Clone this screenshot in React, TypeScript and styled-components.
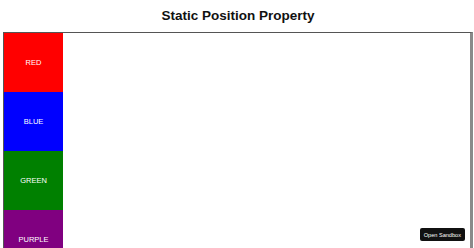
import styled, { createGlobalStyle } from 'styled-components';

const GlobalStyle = createGlobalStyle`
  body {
    margin: 0;
    background: #fff;
    font-family: "Liberation Sans", Arial, sans-serif;
    overflow: hidden;
  }
`;

const Page = styled.div`
  height: 100vh;
  padding: 0 1px 0 3px;
  display: flex;
  flex-direction: column;
`;

const Title = styled.h1`
  margin: 0;
  padding: 7px 0;
  height: 18px;
  line-height: 18px;
  font-size: 13.5px;
  font-weight: bold;
  text-align: center;
  color: #111;
`;

const Stage = styled.div`
  flex: 1;
  overflow: hidden;
  border-top: 1px solid #555;
  border-left: 1px solid #555;
  border-right: 3px solid #8a8a8a;
  display: flex;
  flex-direction: column;
`;

const Box = styled.div<{ bg: string }>`
  width: 59px;
  height: 59px;
  flex: none;
  background: ${props => props.bg};
  color: #fff;
  font-size: 7.5px;
  display: flex;
  align-items: center;
  justify-content: center;
`;

const SandboxButton = styled.button`
  position: fixed;
  right: 9px;
  bottom: 7px;
  height: 13px;
  padding: 0 4px;
  border: none;
  border-radius: 2px;
  background: #111;
  color: #fff;
  font-family: "Liberation Sans", Arial, sans-serif;
  font-size: 5.6px;
`;

const boxes = [
  { label: 'RED', color: 'red' },
  { label: 'BLUE', color: 'blue' },
  { label: 'GREEN', color: 'green' },
  { label: 'PURPLE', color: 'purple' },
];

function App() {
  return (
    <>
      <GlobalStyle />
      <Page>
        <Title>Static Position Property</Title>
        <Stage>
          {boxes.map(box => (
            <Box key={box.label} bg={box.color}>
              {box.label}
            </Box>
          ))}
        </Stage>
      </Page>
      <SandboxButton>Open Sandbox</SandboxButton>
    </>
  );
}

export default App;
